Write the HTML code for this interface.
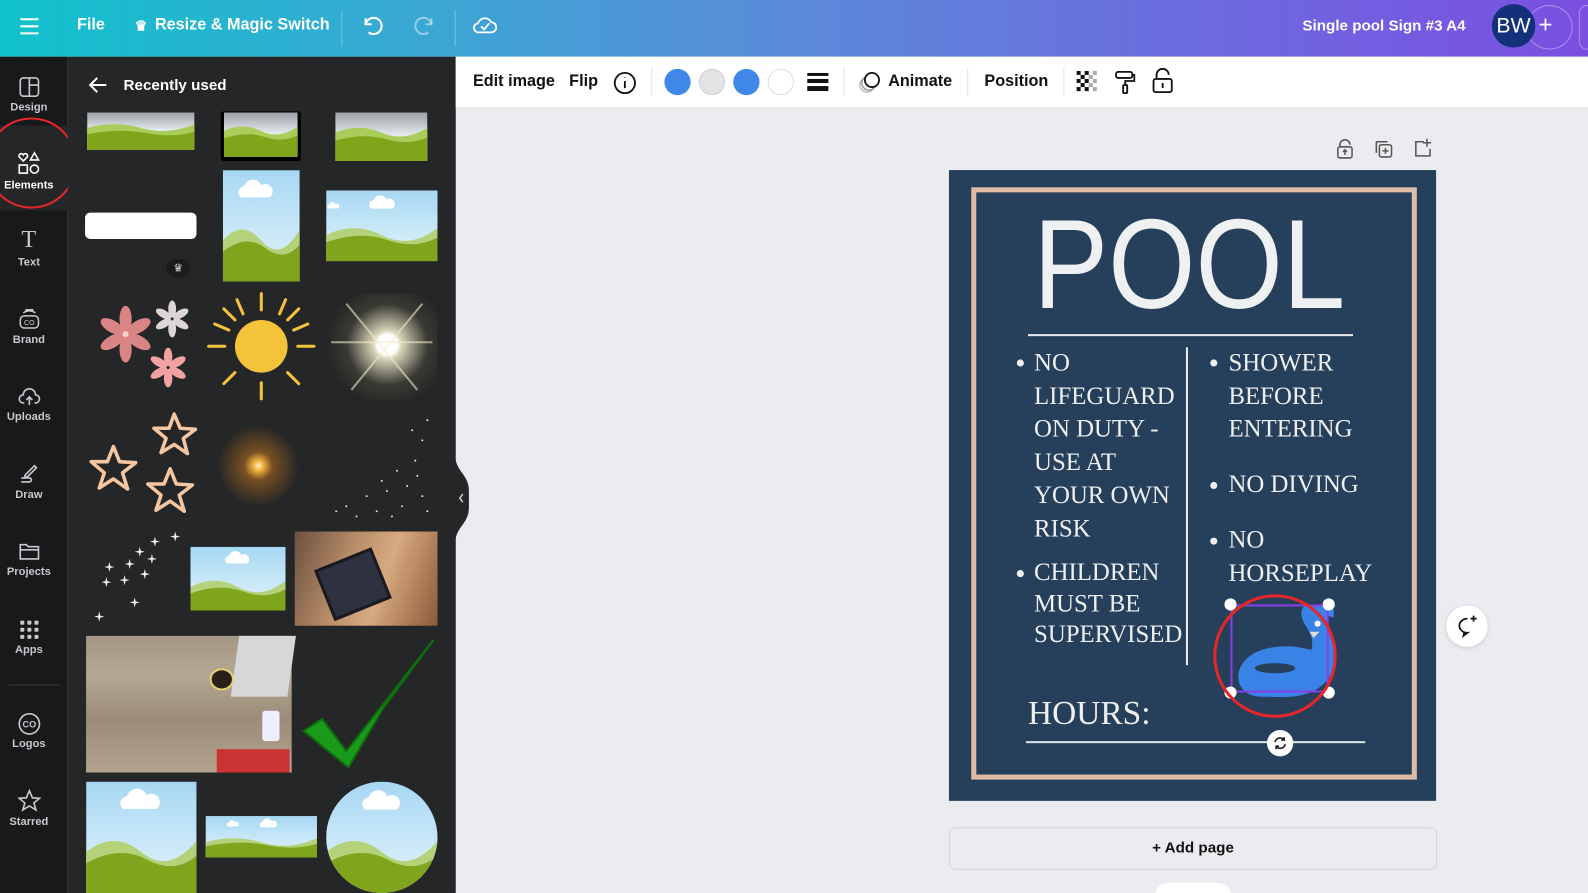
<!DOCTYPE html>
<html><head><meta charset="utf-8">
<style>
html,body{margin:0;padding:0;width:1588px;height:893px;overflow:hidden;background:#ebecf0;font-family:"Liberation Sans",sans-serif}
#w{position:absolute;left:0;top:0;width:1568px;height:882px;transform:scale(1.01276,1.01247);transform-origin:0 0;background:#ebecf0;overflow:hidden}
.a{position:absolute}
.top{left:0;top:0;width:1568px;height:56px;background:linear-gradient(90deg,#10c2cc 0%,#38a9d3 25%,#5b8ad9 50%,#6c6bdf 75%,#7a4fe0 100%)}
.tt{color:#fff;font-size:16px;font-weight:bold;top:16px}
.rail{left:0;top:56px;width:67px;height:826px;background:#18191b}
.panel{left:67px;top:56px;width:383px;height:826px;background:#252627}
.ri{width:57px;text-align:center;color:#c8c9cc;font-size:11px;font-weight:bold}
.tb{left:450px;top:56px;width:1118px;height:50px;background:#fff;border-bottom:1px solid #dfe0e4}
.tl{font-size:16px;font-weight:bold;color:#111;top:72px}
.sep{width:1px;height:28px;background:#e2e3e6;top:67px}
.sw{width:26px;height:26px;border-radius:50%;top:68px}
.serif{font-family:"Liberation Serif",serif;color:#eef0f2;font-size:24.5px;line-height:32.7px}
.dot{width:7px;height:7px;border-radius:50%;background:#eef0f2}
</style></head><body><div id="w">
<div class="a top"></div>
<svg class="a" style="left:19px;top:17px" width="20" height="18"><path d="M1 2h18M1 9h18M1 16h18" stroke="#fff" stroke-width="2"/></svg>
<div class="a tt" style="left:76px">File</div>
<div class="a tt" style="left:133px;font-size:14px;top:17px">&#9819;</div>
<div class="a tt" style="left:153px">Resize &amp; Magic Switch</div>
<div class="a" style="left:337px;top:10px;width:1px;height:36px;background:rgba(255,255,255,.3)"></div>
<svg class="a" style="left:356px;top:13px" width="26" height="26" fill="none" stroke="#fff" stroke-width="2"><path d="M5 5v6h6"/><path d="M5 11a8 8 0 1 1 3 8"/></svg>
<svg class="a" style="left:405px;top:13px" width="26" height="26" fill="none" stroke="rgba(255,255,255,.45)" stroke-width="2"><path d="M21 5v6h-6"/><path d="M21 11a8 8 0 1 0 -3 8"/></svg>
<div class="a" style="left:449px;top:10px;width:1px;height:36px;background:rgba(255,255,255,.3)"></div>
<svg class="a" style="left:466px;top:12px" width="26" height="26" fill="none" stroke="#fff" stroke-width="1.8"><path d="M7 20h12a5 5 0 0 0 0-10 7 7 0 0 0-13 1 4.5 4.5 0 0 0 1 9z"/><path d="M9 14l3 3 5-6"/></svg>
<div class="a tt" style="left:1286px;font-weight:bold;font-size:15px;top:17px">Single pool Sign #3 A4</div>
<div class="a" style="left:1507px;top:5px;width:44px;height:42px;border-radius:50%;border:1px solid rgba(255,255,255,.35)"></div>
<div class="a" style="left:1473px;top:4px;width:43px;height:43px;border-radius:50%;background:#13307a;color:#fff;font-size:21px;line-height:43px;text-align:center">BW</div>
<div class="a" style="left:1519px;top:11px;color:#fff;font-size:24px;line-height:28px">+</div>
<div class="a" style="left:1559px;top:5px;width:30px;height:42px;border-radius:8px;border:1px solid rgba(255,255,255,.35)"></div>

<div class="a rail"></div>
<div class="a" style="left:0;top:124px;width:67px;height:84px;background:#252627"></div>
<div class="a" style="left:8px;top:676px;width:52px;height:1px;background:#333"></div>
<svg class="a" style="left:18px;top:75px" width="22" height="22" fill="none" stroke="#c8c9cc" stroke-width="1.6"><rect x="2" y="2" width="18" height="18" rx="3"/><path d="M11 2v18M11 9h9"/></svg>
<div class="a ri" style="top:100px">Design</div>
<svg class="a" style="left:17px;top:149px" width="24" height="24" fill="none" stroke="#fff" stroke-width="1.6"><path d="M6 10l-4-4a2 2 0 0 1 4-2 2 2 0 0 1 4 2z"/><path d="M17 2l4 7h-8z"/><rect x="2" y="14" width="8" height="8"/><circle cx="17" cy="18" r="4"/></svg>
<div class="a ri" style="top:177px;color:#fff">Elements</div>
<div class="a" style="left:-14px;top:116px;width:86px;height:86px;border-radius:50%;border:2px solid #e5262b"></div>
<div class="a" style="left:0;top:224px;width:57px;text-align:center;color:#c8c9cc;font-family:'Liberation Serif',serif;font-size:24px">T</div>
<div class="a ri" style="top:253px">Text</div>
<svg class="a" style="left:17px;top:304px" width="24" height="22" fill="none" stroke="#c8c9cc" stroke-width="1.5"><rect x="3" y="8" width="18" height="12" rx="4"/><path d="M6 5q6-4 12 0M8 2h8"/><text x="12" y="17" font-size="7" fill="#c8c9cc" stroke="none" text-anchor="middle" font-family="Liberation Sans">CO</text></svg>
<div class="a ri" style="top:330px">Brand</div>
<svg class="a" style="left:17px;top:380px" width="24" height="22" fill="none" stroke="#c8c9cc" stroke-width="1.6"><path d="M7 18H6a4 4 0 0 1 0-8 6 6 0 0 1 12 0 4 4 0 0 1 0 8h-1"/><path d="M12 20v-8M9 15l3-3 3 3"/></svg>
<div class="a ri" style="top:406px">Uploads</div>
<svg class="a" style="left:17px;top:456px" width="24" height="22" fill="none" stroke="#c8c9cc" stroke-width="1.6"><path d="M8 13l9-9 2 2-9 9-3 1z"/><path d="M4 16h8a2 2 0 0 1 0 4H4"/></svg>
<div class="a ri" style="top:483px">Draw</div>
<svg class="a" style="left:17px;top:533px" width="24" height="22" fill="none" stroke="#c8c9cc" stroke-width="1.6"><path d="M3 5h6l2 2h10v12H3zM3 10h18"/></svg>
<div class="a ri" style="top:559px">Projects</div>
<svg class="a" style="left:19px;top:612px" width="20" height="20" fill="#c8c9cc"><rect x="1" y="1" width="4" height="4" rx="1"/><rect x="8" y="1" width="4" height="4" rx="1"/><rect x="15" y="1" width="4" height="4" rx="1"/><rect x="1" y="8" width="4" height="4" rx="1"/><rect x="8" y="8" width="4" height="4" rx="1"/><rect x="15" y="8" width="4" height="4" rx="1"/><rect x="1" y="15" width="4" height="4" rx="1"/><rect x="8" y="15" width="4" height="4" rx="1"/><rect x="15" y="15" width="4" height="4" rx="1"/></svg>
<div class="a ri" style="top:636px">Apps</div>
<svg class="a" style="left:17px;top:703px" width="24" height="24" fill="none" stroke="#c8c9cc" stroke-width="1.6"><circle cx="12" cy="12" r="10"/><text x="12" y="15.5" font-size="9" font-weight="bold" fill="#c8c9cc" stroke="none" text-anchor="middle" font-family="Liberation Sans">CO</text></svg>
<div class="a ri" style="top:729px">Logos</div>
<svg class="a" style="left:17px;top:779px" width="24" height="24" fill="none" stroke="#c8c9cc" stroke-width="1.6"><path d="M12 2l3 7 7 .5-5.5 4.5 2 7-6.5-4-6.5 4 2-7L2 9.5 9 9z"/></svg>
<div class="a ri" style="top:806px">Starred</div>

<div class="a panel"></div>
<svg class="a" style="left:87px;top:75px" width="20" height="18" fill="none" stroke="#fff" stroke-width="2"><path d="M18 9H3M9 2L2 9l7 7"/></svg>
<div class="a" style="left:122px;top:76px;color:#fff;font-size:15px;font-weight:bold">Recently used</div>
<svg width="0" height="0" style="position:absolute"><defs>
<linearGradient id="sky" x1="0" y1="0" x2="0" y2="1"><stop offset="0" stop-color="#a6d8f3"/><stop offset="1" stop-color="#e6f4fb"/></linearGradient>
<linearGradient id="sky2" x1="0" y1="0" x2="0" y2="1"><stop offset="0" stop-color="#9aa0a5"/><stop offset=".5" stop-color="#e8eef2"/></linearGradient>
<symbol id="land" viewBox="0 0 100 60" preserveAspectRatio="none"><rect width="100" height="60" fill="url(#sky)"/><path d="M0 38q25-12 50 0t50-6v28H0z" fill="#b3d27a"/><path d="M0 44q30-10 55-2t45-2v20H0z" fill="#7fa51c"/></symbol>
<symbol id="land2" viewBox="0 0 100 60" preserveAspectRatio="none"><rect width="100" height="60" fill="url(#sky2)"/><path d="M0 25q25-12 50 0t50-6v41H0z" fill="#a9cc5b"/><path d="M0 35q30-10 55-2t45-2v29H0z" fill="#80a51a"/></symbol>
<symbol id="cloud" viewBox="0 0 40 20"><path d="M6 18a6 6 0 0 1 3-11 9 9 0 0 1 17-1 7 7 0 0 1 8 12z" fill="#fff"/></symbol>
</defs></svg>
<svg class="a" style="left:86px;top:111px" width="106" height="37"><use href="#land2" width="106" height="37"/></svg>
<div class="a" style="left:218px;top:110px;width:79px;height:49px;background:#000;border-radius:3px"></div>
<svg class="a" style="left:221px;top:111px" width="73" height="44"><use href="#land2" width="73" height="44"/></svg>
<svg class="a" style="left:331px;top:111px" width="91" height="48"><use href="#land2" width="91" height="48"/></svg>
<div class="a" style="left:84px;top:210px;width:110px;height:26px;background:#fff;border-radius:5px"></div>
<div class="a" style="left:164px;top:256px;width:24px;height:18px;border-radius:9px;background:#1b1c1e;color:#ddd;font-size:11px;text-align:center;line-height:18px">&#9819;</div>
<svg class="a" style="left:220px;top:168px" width="76" height="110"><use href="#land" width="76" height="110"/><use href="#cloud" x="12" y="8" width="40" height="22"/></svg>
<svg class="a" style="left:322px;top:188px" width="110" height="70"><use href="#land" width="110" height="70"/><use href="#cloud" x="40" y="4" width="30" height="16"/><use href="#cloud" x="0" y="10" width="14" height="10"/></svg>
<svg class="a" style="left:92px;top:295px" width="100" height="92">
<g fill="#d98585" transform="translate(32,35)"><g id="pet"><ellipse cx="0" cy="-15" rx="6" ry="13"/></g><use href="#pet" transform="rotate(60)"/><use href="#pet" transform="rotate(120)"/><use href="#pet" transform="rotate(180)"/><use href="#pet" transform="rotate(240)"/><use href="#pet" transform="rotate(300)"/><circle r="3" fill="#f6cccc"/></g>
<g fill="#dcd6d6" transform="translate(78,20) scale(.65)"><use href="#pet"/><use href="#pet" transform="rotate(60)"/><use href="#pet" transform="rotate(120)"/><use href="#pet" transform="rotate(180)"/><use href="#pet" transform="rotate(240)"/><use href="#pet" transform="rotate(300)"/></g>
<g fill="#f1a3a3" transform="translate(74,68) scale(.7)"><use href="#pet"/><use href="#pet" transform="rotate(60)"/><use href="#pet" transform="rotate(120)"/><use href="#pet" transform="rotate(180)"/><use href="#pet" transform="rotate(240)"/><use href="#pet" transform="rotate(300)"/></g>
</svg>
<svg class="a" style="left:204px;top:288px" width="108" height="108"><g stroke="#f5c33a" stroke-width="3" stroke-linecap="round"><path d="M54 2v16M54 90v16M2 54h16M90 54h16M17 17l11 11M80 80l11 11M91 17L80 28M28 80L17 91M30 8l6 14M78 8l-6 14M8 32l14 6M100 32l-14 6"/></g><circle cx="54" cy="54" r="26" fill="#f5c33a"/></svg>
<div class="a" style="left:322px;top:290px;width:110px;height:105px;background:radial-gradient(circle at 55% 48%,#fff 0,#fff 10px,#d8d4b8 14px,#3a3a34 40px,#262626 60px)"></div>
<svg class="a" style="left:322px;top:290px" width="110" height="105"><path d="M20 10L90 95M95 10L25 95M5 48h100" stroke="rgba(240,235,200,.6)" stroke-width="2"/></svg>
<svg class="a" style="left:84px;top:405px" width="112" height="112" fill="none" stroke="#f5c6a0" stroke-width="3.5" stroke-linejoin="round"><path d="M88 4l6 14 15 1-12 9 4 15-13-9-13 8 5-14-12-10 15 0z"/><path d="M28 36l6 15 16 1-13 10 5 16-14-10-14 9 5-15-13-11 16 0z"/><path d="M84 58l6 15 16 1-13 10 5 16-14-10-14 9 5-15-13-11 16 0z"/></svg>
<div class="a" style="left:210px;top:420px;width:90px;height:80px;background:radial-gradient(circle,#fff3c0 0,#f0b040 5px,rgba(200,120,30,.5) 14px,rgba(40,38,39,0) 40px)"></div>
<svg class="a" style="left:322px;top:405px" width="110" height="110" fill="#ddd"><g><circle cx="100" cy="10" r="1"/><circle cx="95" cy="30" r="1"/><circle cx="88" cy="50" r="1"/><circle cx="70" cy="60" r="1"/><circle cx="80" cy="75" r="1"/><circle cx="60" cy="80" r="1"/><circle cx="40" cy="85" r="1"/><circle cx="20" cy="95" r="1"/><circle cx="50" cy="100" r="1"/><circle cx="75" cy="95" r="1"/><circle cx="95" cy="85" r="1"/><circle cx="10" cy="100" r="1"/><circle cx="30" cy="105" r="1"/><circle cx="65" cy="105" r="1"/><circle cx="90" cy="65" r="1"/><circle cx="100" cy="100" r="1"/><circle cx="55" cy="70" r="1"/><circle cx="85" cy="20" r="1"/></g></svg>
<svg class="a" style="left:85px;top:525px" width="95" height="95" fill="#eee"><g><path id="sp" d="M0-5L1-1 5 0 1 1 0 5-1 1-5 0-1-1z" transform="translate(88,5)"/><use href="#sp" x="-20" y="5"/><use href="#sp" x="-35" y="15"/><use href="#sp" x="-23" y="22"/><use href="#sp" x="-65" y="30"/><use href="#sp" x="-45" y="27"/><use href="#sp" x="-30" y="37"/><use href="#sp" x="-68" y="45"/><use href="#sp" x="-50" y="43"/><use href="#sp" x="-40" y="65"/><use href="#sp" x="-75" y="79"/></g></svg>
<svg class="a" style="left:188px;top:540px" width="94" height="63"><use href="#land" width="94" height="63"/><use href="#cloud" x="32" y="4" width="28" height="14"/></svg>
<div class="a" style="left:291px;top:525px;width:141px;height:93px;background:linear-gradient(110deg,#6b5040 0%,#b58a66 35%,#d8aa80 60%,#8a5a38 100%)"></div>
<div class="a" style="left:318px;top:550px;width:55px;height:48px;background:#2d3140;transform:rotate(-22deg);border:3px solid #1a1a20"></div>
<div class="a" style="left:85px;top:628px;width:203px;height:135px;background:linear-gradient(180deg,#a39784 0%,#b5a893 30%,#9a8c78 60%,#b3a38d 100%)"></div>
<div class="a" style="left:232px;top:628px;width:56px;height:60px;background:#d6d7d9;transform:skewX(-8deg)"></div>
<div class="a" style="left:259px;top:702px;width:17px;height:30px;background:#eef;border-radius:3px"></div>
<div class="a" style="left:207px;top:660px;width:20px;height:18px;border-radius:50%;background:#2a2018;border:2px solid #e8d070"></div>
<div class="a" style="left:214px;top:740px;width:72px;height:23px;background:#c33"></div>
<svg class="a" style="left:298px;top:630px" width="134" height="130"><path d="M2 92l18-12 24 32L130 2 80 70 46 128z" fill="#1a9a1a" stroke="#0d6e0d" stroke-width="2"/></svg>
<svg class="a" style="left:85px;top:772px" width="109" height="110"><use href="#land" width="109" height="110"/><use href="#cloud" x="30" y="6" width="46" height="24"/></svg>
<svg class="a" style="left:203px;top:806px" width="110" height="41"><use href="#land" width="110" height="41"/><use href="#cloud" x="52" y="2" width="20" height="10"/><use href="#cloud" x="20" y="4" width="14" height="7"/></svg>
<svg class="a" style="left:322px;top:772px" width="110" height="110"><clipPath id="cc"><circle cx="55" cy="55" r="55"/></clipPath><g clip-path="url(#cc)"><use href="#land" width="110" height="110"/><use href="#cloud" x="32" y="8" width="44" height="22"/></g></svg>
<svg class="a" style="left:449px;top:448px" width="16" height="90"><path d="M0 0q0 10 8 20q6 8 6 16v18q0 8-6 16q-8 10-8 20z" fill="#252627"/><path d="M8 40l-3 4 3 4" stroke="#ccc" stroke-width="1.5" fill="none"/></svg>

<div class="a tb"></div>
<div class="a tl" style="left:467px">Edit image</div>
<div class="a tl" style="left:562px">Flip</div>
<svg class="a" style="left:605px;top:70px" width="24" height="24" fill="none" stroke="#111" stroke-width="1.8"><circle cx="12" cy="12" r="10"/><path d="M12 10v7M12 6.5v.5"/></svg>
<div class="a sep" style="left:643px"></div>
<div class="a sw" style="left:656px;background:#3f88ea"></div>
<div class="a sw" style="left:690px;background:#e2e3e5;border:1px solid #d0d0d0;width:24px;height:24px"></div>
<div class="a sw" style="left:724px;background:#3f88ea"></div>
<div class="a sw" style="left:758px;background:#fff;border:1px solid #ddd;width:24px;height:24px"></div>
<svg class="a" style="left:797px;top:72px" width="21" height="18"><rect y="0" width="21" height="3" fill="#111"/><rect y="6" width="21" height="4" fill="#111"/><rect y="13" width="21" height="5" fill="#111"/></svg>
<div class="a sep" style="left:833px"></div>
<svg class="a" style="left:847px;top:69px" width="24" height="24" fill="none"><circle cx="9" cy="15" r="7" stroke="#bbb" stroke-width="1.5"/><circle cx="11" cy="13" r="7" stroke="#999" stroke-width="1.5"/><circle cx="14" cy="10" r="7" fill="#fff" stroke="#111" stroke-width="1.8"/></svg>
<div class="a tl" style="left:877px">Animate</div>
<div class="a sep" style="left:955px"></div>
<div class="a tl" style="left:972px">Position</div>
<div class="a sep" style="left:1050px"></div>
<svg class="a" style="left:1063px;top:70px" width="22" height="22"><g fill="#111"><rect x="0" y="0" width="4" height="4"/><rect x="8" y="0" width="4" height="4"/><rect x="4" y="4" width="4" height="4"/><rect x="0" y="8" width="4" height="4"/><rect x="8" y="8" width="4" height="4"/><rect x="4" y="12" width="4" height="4"/><rect x="0" y="16" width="4" height="4"/><rect x="8" y="16" width="4" height="4"/></g><g fill="#aaa"><rect x="12" y="4" width="4" height="4"/><rect x="16" y="0" width="4" height="4"/><rect x="12" y="12" width="4" height="4"/><rect x="16" y="8" width="4" height="4"/><rect x="16" y="16" width="4" height="4"/></g></svg>
<svg class="a" style="left:1100px;top:69px" width="22" height="24" fill="none" stroke="#111" stroke-width="1.8"><rect x="2" y="2" width="16" height="6" rx="2"/><path d="M18 5h2v6h-9v4"/><rect x="9" y="15" width="4" height="8" rx="1"/></svg>
<svg class="a" style="left:1137px;top:67px" width="22" height="26" fill="none" stroke="#111" stroke-width="1.8"><path d="M5 11V7a6 6 0 0 1 12 0"/><rect x="2" y="11" width="18" height="13" rx="2"/><path d="M11 15v5"/></svg>

<svg class="a" style="left:1318px;top:137px" width="20" height="20" fill="none" stroke="#555" stroke-width="1.5"><path d="M5 8V6a5 5 0 0 1 10 0"/><rect x="3" y="8" width="14" height="11" rx="2"/><path d="M10 11v5M8 13l2-2 2 2"/></svg>
<svg class="a" style="left:1356px;top:137px" width="20" height="20" fill="none" stroke="#555" stroke-width="1.5"><rect x="6" y="6" width="12" height="12" rx="2"/><path d="M3 14V4a1 1 0 0 1 1-1h10M12 9v6M9 12h6"/></svg>
<svg class="a" style="left:1394px;top:136px" width="20" height="20" fill="none" stroke="#555" stroke-width="1.5"><path d="M12 4H4v14h14v-7M15 1v8M11 5h8"/></svg>

<div class="a" style="left:937px;top:168px;width:481px;height:623px;background:#263f5a"></div>
<div class="a" style="left:959px;top:185px;width:430px;height:575px;border:5px solid #dfbca5"></div>
<div class="a" style="left:1001px;top:198px;width:320px;text-align:center;color:#eef0f2;font-size:126px;line-height:126px;transform:scaleX(.88);transform-origin:center;white-space:nowrap">POOL</div>
<div class="a" style="left:1015px;top:330px;width:321px;height:2px;background:#e8ebee"></div>
<div class="a" style="left:1171px;top:343px;width:2px;height:314px;background:#e8ebee"></div>
<div class="a dot" style="left:1004px;top:355px"></div>
<div class="a serif" style="left:1021px;top:343px">NO<br>LIFEGUARD<br>ON DUTY -<br>USE AT<br>YOUR OWN<br>RISK</div>
<div class="a dot" style="left:1004px;top:563px"></div>
<div class="a serif" style="left:1021px;top:551px;line-height:30.7px">CHILDREN<br>MUST BE<br>SUPERVISED</div>
<div class="a dot" style="left:1195px;top:355px"></div>
<div class="a serif" style="left:1213px;top:343px">SHOWER<br>BEFORE<br>ENTERING</div>
<div class="a dot" style="left:1195px;top:476px"></div>
<div class="a serif" style="left:1213px;top:463px">NO DIVING</div>
<div class="a dot" style="left:1195px;top:531px"></div>
<div class="a serif" style="left:1213px;top:518px">NO<br>HORSEPLAY</div>
<div class="a serif" style="left:1015px;top:685px;font-size:33px;line-height:40px">HOURS:</div>
<div class="a" style="left:1013px;top:732px;width:335px;height:2px;background:#dfe3e6"></div>
<svg class="a" style="left:1213px;top:598px" width="104" height="92"><path d="M32 90c-30 0-32-40 8-48 20-4 34 0 42 2 4-18-10-24-10-36 0-16 28-16 34 0l-2 4-6-2c-2 8 4 14 6 24 6 16 2 46-30 54-14 4-28 2-42 2z" fill="#3a83e6"/><ellipse cx="46" cy="62" rx="20" ry="5" fill="#263f5a"/><circle cx="88" cy="18" r="3" fill="#fff"/><path d="M80 26l10 0 -6 6z" fill="#ddd"/></svg>
<div class="a" style="left:1215px;top:597px;width:97px;height:87px;border:2px solid #8b3ee6;box-sizing:border-box"></div>
<div class="a" style="left:1209px;top:591px;width:12px;height:12px;border-radius:50%;background:#fff"></div>
<div class="a" style="left:1306px;top:591px;width:12px;height:12px;border-radius:50%;background:#fff"></div>
<div class="a" style="left:1209px;top:678px;width:12px;height:12px;border-radius:50%;background:#fff"></div>
<div class="a" style="left:1306px;top:678px;width:12px;height:12px;border-radius:50%;background:#fff"></div>
<div class="a" style="left:1198px;top:587px;width:122px;height:122px;border-radius:50%;border:3px solid #e5262b;box-sizing:border-box"></div>
<div class="a" style="left:1251px;top:721px;width:26px;height:26px;border-radius:50%;background:#fff"></div>
<svg class="a" style="left:1256px;top:726px" width="16" height="16" fill="none" stroke="#222" stroke-width="1.6"><path d="M3 7a5 5 0 0 1 9-2M13 9a5 5 0 0 1-9 2M12 2v3h-3M4 14v-3h3"/></svg>
<div class="a" style="left:1428px;top:598px;width:41px;height:41px;border-radius:50%;background:#fff;box-shadow:0 1px 4px rgba(0,0,0,.15)"></div>
<svg class="a" style="left:1437px;top:606px" width="24" height="24" fill="none" stroke="#111" stroke-width="1.7"><path d="M12 5a8 7 0 1 0 0 14l-4 3 1-4"/><path d="M18 2v6M15 5h6"/></svg>
<div class="a" style="left:937px;top:817px;width:480px;height:40px;border:1px solid #d3d5d9;border-radius:6px;background:#ebecf0;text-align:center;line-height:40px;font-size:15px;font-weight:bold;color:#111">+ Add page</div>
<div class="a" style="left:1140px;top:872px;width:76px;height:30px;border-radius:14px;background:#fff"></div>
</div></body></html>
